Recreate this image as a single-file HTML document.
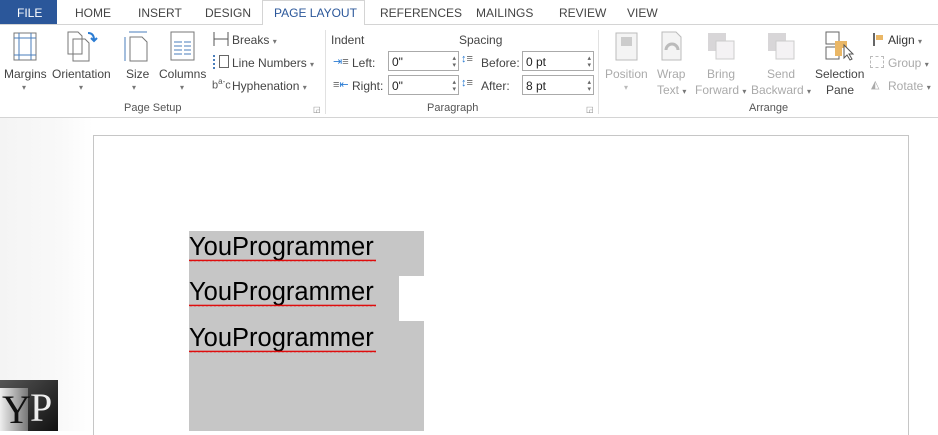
<!DOCTYPE html>
<html><head><style>
*{margin:0;padding:0;box-sizing:border-box}
body{width:938px;height:431px;overflow:hidden;background:#fff;font-family:"Liberation Sans",sans-serif;position:relative;color:#444}
.a{position:absolute;white-space:nowrap}
.tab{top:6px;font-size:12px;color:#444}
.lbl{font-size:12px;color:#444}
.dis{color:#aaa}
.grp{font-size:11px;color:#555;top:102px}
.box{position:absolute;border:1px solid #aaa;background:#fff;height:20px;font-size:12px;color:#222;padding:3px 0 0 3px}
.ar{position:absolute;right:2px;font-size:7px;color:#666;line-height:7px}
.dd{font-size:8px;color:#777}
.wv{position:absolute;left:189px;width:187px;height:3px;background:url("data:image/svg+xml,%3Csvg xmlns='http://www.w3.org/2000/svg' width='4' height='3'%3E%3Cpath d='M0 2L1 1L2 2L3 1L4 2' fill='none' stroke='%23e00000' stroke-width='1'/%3E%3C/svg%3E") repeat-x}
</style></head><body>
<div class="a" style="left:0;top:0;width:57px;height:25px;background:#2b579a"></div>
<div class="a tab" style="left:17px;color:#fff">FILE</div>
<div class="a tab" style="left:75px">HOME</div>
<div class="a tab" style="left:138px">INSERT</div>
<div class="a tab" style="left:205px">DESIGN</div>
<div class="a" style="left:0;top:24px;width:938px;height:1px;background:#d4d4d4"></div>
<div class="a" style="left:262px;top:0;width:103px;height:25px;border:1px solid #d4d4d4;border-bottom:none;background:#fff"></div>
<div class="a tab" style="left:274px;color:#2b579a">PAGE LAYOUT</div>
<div class="a tab" style="left:380px">REFERENCES</div>
<div class="a tab" style="left:476px">MAILINGS</div>
<div class="a tab" style="left:559px">REVIEW</div>
<div class="a tab" style="left:627px">VIEW</div>
<div class="a" style="left:0;top:117px;width:938px;height:1px;background:#d4d4d4"></div>
<div class="a" style="left:325px;top:30px;width:1px;height:84px;background:#e1e1e1"></div>
<div class="a" style="left:598px;top:30px;width:1px;height:84px;background:#e1e1e1"></div>
<svg class="a" style="left:0;top:28px" width="330" height="40">
<rect x="14" y="5" width="22" height="27" fill="none" stroke="#777"/>
<line x1="14" y1="10" x2="36" y2="10" stroke="#4a7ebb"/><line x1="14" y1="27" x2="36" y2="27" stroke="#4a7ebb"/>
<line x1="19" y1="5" x2="19" y2="32" stroke="#4a7ebb"/><line x1="31" y1="5" x2="31" y2="32" stroke="#4a7ebb"/>
<path d="M68 4h10l4 4v18H68z M73 11h12l4 4v18H73z" fill="#fff" stroke="#777"/>
<path d="M88 5q6 0 6 7M91 10l3 3 3-3" fill="none" stroke="#2b7cd3" stroke-width="2"/>
<path d="M130 9h12l5 5v19h-17z" fill="#fff" stroke="#777"/>
<line x1="129" y1="4" x2="147" y2="4" stroke="#4a7ebb"/><line x1="125" y1="9" x2="125" y2="33" stroke="#4a7ebb"/>
<rect x="171" y="4" width="23" height="28" fill="none" stroke="#777"/>
<g stroke="#4a7ebb"><line x1="174" y1="14" x2="182" y2="14"/><line x1="184" y1="14" x2="191" y2="14"/><line x1="174" y1="18" x2="182" y2="18"/><line x1="184" y1="18" x2="191" y2="18"/><line x1="174" y1="22" x2="182" y2="22"/><line x1="184" y1="22" x2="191" y2="22"/><line x1="174" y1="26" x2="182" y2="26"/><line x1="184" y1="26" x2="191" y2="26"/></g>
<path d="M214 4v14M214 11h14M228 4v14" fill="none" stroke="#555"/>
</svg>
<div class="a lbl" style="left:4px;top:67px">Margins</div>
<div class="a lbl" style="left:52px;top:67px">Orientation</div>
<div class="a lbl" style="left:126px;top:67px">Size</div>
<div class="a lbl" style="left:159px;top:67px">Columns</div>
<div class="a dd" style="left:22px;top:83px">▾</div><div class="a dd" style="left:79px;top:83px">▾</div><div class="a dd" style="left:132px;top:83px">▾</div><div class="a dd" style="left:180px;top:83px">▾</div>
<div class="a lbl" style="left:232px;top:33px">Breaks <span class="dd">▾</span></div>
<div class="a" style="left:213px;top:55px;width:4px;height:14px;border-left:2px dotted #4a7ebb"></div>
<div class="a" style="left:219px;top:55px;width:10px;height:13px;border:1px solid #666"></div>
<div class="a lbl" style="left:232px;top:56px">Line Numbers <span class="dd">▾</span></div>
<div class="a" style="left:212px;top:77px;font-size:11px;color:#555">b<sup style="font-size:8px">a-</sup>c</div>
<div class="a lbl" style="left:232px;top:79px">Hyphenation <span class="dd">▾</span></div>
<div class="a grp" style="left:124px">Page Setup</div>
<div class="a" style="left:313px;top:105px;font-size:8px;color:#888">◲</div>
<div class="a lbl" style="left:331px;top:33px">Indent</div>
<div class="a lbl" style="left:459px;top:33px">Spacing</div>
<div class="a" style="left:333px;top:55px;font-size:11px;color:#2b7cd3">⇥<span style="color:#666">≡</span></div>
<div class="a lbl" style="left:352px;top:56px">Left:</div>
<div class="a" style="left:333px;top:78px;font-size:11px;color:#666">≡<span style="color:#2b7cd3">⇤</span></div>
<div class="a lbl" style="left:352px;top:79px">Right:</div>
<div class="box" style="left:388px;top:51px;width:71px">0"<span class="ar" style="top:3px">▴<br>▾</span></div>
<div class="box" style="left:388px;top:75px;width:71px">0"<span class="ar" style="top:3px">▴<br>▾</span></div>
<div class="a" style="left:461px;top:53px;font-size:11px;color:#2b7cd3">↕<span style="color:#666">≡</span></div>
<div class="a" style="left:461px;top:77px;font-size:11px;color:#2b7cd3">↕<span style="color:#666">≡</span></div>
<div class="a lbl" style="left:481px;top:56px">Before:</div>
<div class="a lbl" style="left:481px;top:79px">After:</div>
<div class="box" style="left:522px;top:51px;width:72px">0 pt<span class="ar" style="top:3px">▴<br>▾</span></div>
<div class="box" style="left:522px;top:75px;width:72px">8 pt<span class="ar" style="top:3px">▴<br>▾</span></div>
<div class="a grp" style="left:427px">Paragraph</div>
<div class="a" style="left:586px;top:105px;font-size:8px;color:#888">◲</div>
<svg class="a" style="left:600px;top:28px" width="338" height="40">
<rect x="16" y="5" width="21" height="27" fill="#f4f4f4" stroke="#bbb"/><rect x="21" y="9" width="11" height="9" fill="#ccc"/>
<path d="M62 4h14l5 5v23H62z" fill="#f4f4f4" stroke="#bbb"/><path d="M66 22a6 6 0 0 1 12 0" fill="none" stroke="#bbb" stroke-width="3"/>
<rect x="108" y="5" width="18" height="18" fill="#d8d6d8"/><rect x="116" y="13" width="18" height="18" fill="#f4f2f4" stroke="#ccc"/>
<rect x="168" y="5" width="18" height="18" fill="#d8d6d8"/><rect x="176" y="13" width="18" height="18" fill="#f4f2f4" stroke="#ccc"/>
<rect x="226" y="4" width="13" height="12" fill="none" stroke="#666"/><rect x="226" y="19" width="13" height="12" fill="none" stroke="#666"/>
<path d="M235 13h12v7h-5v8h-7z" fill="#eab766"/>
<path d="M244 17v13l3-3 3 5 2-1-3-5h4z" fill="#fff" stroke="#555"/>
</svg>
<div class="a lbl dis" style="left:605px;top:67px">Position</div>
<div class="a lbl dis" style="left:657px;top:67px">Wrap</div>
<div class="a lbl dis" style="left:657px;top:83px">Text <span class="dd">▾</span></div>
<div class="a lbl dis" style="left:707px;top:67px">Bring</div>
<div class="a lbl dis" style="left:695px;top:83px">Forward <span class="dd">▾</span></div>
<div class="a lbl dis" style="left:767px;top:67px">Send</div>
<div class="a lbl dis" style="left:751px;top:83px">Backward <span class="dd">▾</span></div>
<div class="a dd" style="left:624px;top:83px;color:#bbb">▾</div>
<div class="a lbl" style="left:815px;top:67px">Selection</div>
<div class="a lbl" style="left:826px;top:83px">Pane</div>
<div class="a" style="left:873px;top:33px;width:2px;height:13px;background:#666"></div>
<div class="a" style="left:876px;top:35px;width:7px;height:5px;background:#eab766"></div>
<div class="a lbl" style="left:888px;top:33px;color:#333">Align <span class="dd">▾</span></div>
<div class="a" style="left:870px;top:56px;width:14px;height:12px;border:1px dashed #bbb"></div>
<div class="a lbl dis" style="left:888px;top:56px">Group <span class="dd">▾</span></div>
<div class="a" style="left:871px;top:78px;font-size:11px;color:#aaa">◭</div>
<div class="a lbl dis" style="left:888px;top:79px">Rotate <span class="dd">▾</span></div>
<div class="a grp" style="left:749px">Arrange</div>
<div class="a" style="left:0;top:118px;width:938px;height:313px;background:linear-gradient(90deg,#f4f4f4 0,#f9f9f9 60px,#fff 93px)"></div>
<div class="a" style="left:93px;top:135px;width:816px;height:300px;background:#fff;border:1px solid #c6c6c6;border-bottom:none"></div>
<div class="a" style="left:189px;top:231px;width:235px;height:200px;background:#c6c6c6"></div>
<div class="a" style="left:399px;top:276px;width:25px;height:45px;background:#fff"></div>
<div class="a" style="left:189px;top:232px;font-size:25.5px;color:#000;line-height:30px">YouProgrammer</div>
<div class="a" style="left:189px;top:277px;font-size:25.5px;color:#000;line-height:30px">YouProgrammer</div>
<div class="a" style="left:189px;top:323px;font-size:25.5px;color:#000;line-height:30px">YouProgrammer</div>
<div class="wv" style="top:259px"></div>
<div class="wv" style="top:304px"></div>
<div class="wv" style="top:350px"></div>
<div class="a" style="left:0;top:380px;width:58px;height:51px;background:linear-gradient(135deg,#555,#111)"></div>
<div class="a" style="left:0;top:388px;width:28px;height:43px;background:linear-gradient(90deg,#eee,#777)"></div>
<div class="a" style="left:2px;top:386px;font-family:'Liberation Serif',serif;font-size:40px;color:#111">Y</div>
<div class="a" style="left:30px;top:384px;font-family:'Liberation Serif',serif;font-size:40px;color:#eee">P</div>
</body></html>
